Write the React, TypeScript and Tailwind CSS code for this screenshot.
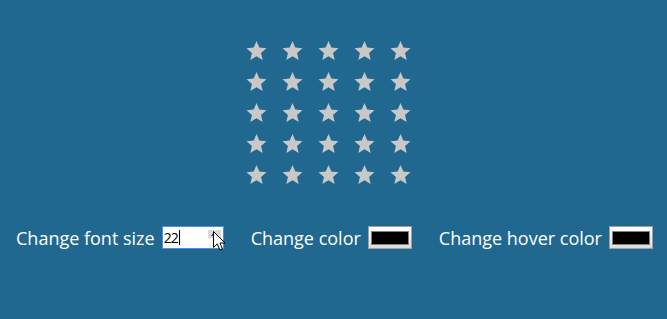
import React from 'react';

function Star() {
  return (
    <svg width="21" height="21" viewBox="0 0 22 21" className="block">
      <path
        d="M11 0.5L13.94 7.45 21.46 8.1 15.76 13.05 17.47 20.4 11 16.5 4.53 20.4 6.24 13.05 0.54 8.1 8.06 7.45z"
        fill="#c8c8c8"
      />
    </svg>
  );
}

function Swatch() {
  return (
    <div className="w-[44px] h-[23px] border border-[#a0a0a0] bg-gradient-to-b from-white to-[#dcdcdc] flex items-center justify-center">
      <div className="w-[38px] h-[14px] bg-black border border-[#808080]" />
    </div>
  );
}

function Cursor() {
  return (
    <svg width="13" height="21" viewBox="0 0 13 21" className="absolute left-[50px] top-[4px]">
      <path
        d="M0.5 0.5v16l3.8-3.6 2.6 6.2 2.6-1.1-2.6-6h5.1z"
        fill="#fff"
        stroke="#000"
        strokeWidth="1"
      />
    </svg>
  );
}

export default function App() {
  const rows = [0, 1, 2, 3, 4];

  return (
    <div
      className="w-[667px] h-[319px] bg-[#216891] text-white overflow-hidden"
      style={{ fontFamily: '"Open Sans", "Liberation Sans", sans-serif' }}
    >
      <div className="pt-[40px] pl-[246px] flex flex-col gap-[10px]">
        {rows.map((r) => (
          <div key={r} className="flex gap-[15px]">
            {rows.map((c) => (
              <Star key={c} />
            ))}
          </div>
        ))}
      </div>

      <div className="mt-[41px] pl-[16px] flex items-center gap-[27px] text-[18px] leading-none">
        <div className="flex items-center gap-[7px]">
          <span>Change font size</span>
          <div className="relative w-[62px] h-[23px] bg-white border border-[#4d8fe0] flex items-center pl-[1px]">
            <span
              className="text-black text-[14px] tracking-[-1px]"
              style={{ fontFamily: '"Open Sans", "Liberation Sans", sans-serif' }}
            >
              22
            </span>
            <span className="ml-[1px] w-px h-[15px] bg-black" />
            <div className="absolute left-[45px] top-[3px] w-[13px] h-[8px] bg-[#d9d9d9] flex items-center justify-center">
              <div className="w-0 h-0 border-l-[3px] border-r-[3px] border-b-[4px] border-l-transparent border-r-transparent border-b-[#333]" />
            </div>
            <Cursor />
          </div>
        </div>
        <div className="flex items-center gap-[7px]">
          <span>Change color</span>
          <Swatch />
        </div>
        <div className="flex items-center gap-[7px]">
          <span>Change hover color</span>
          <Swatch />
        </div>
      </div>
    </div>
  );
}
